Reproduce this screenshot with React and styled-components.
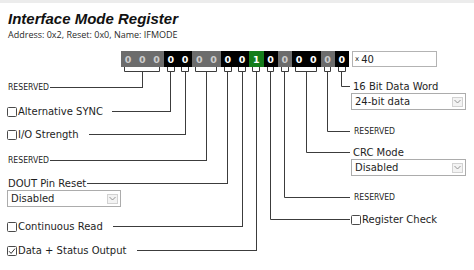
import React from "react";
import styled, { createGlobalStyle } from "styled-components";

const X0 = 121; // left edge of bit 15
const BIT_W = 14.25;
const LEFT_X = 7;
const RIGHT_X = 350;
const LINE = "#3c3c3c";

// register fields, bit 15 first
const groups = [
  { n: 3, kind: "reserved", value: "000", side: "left", y: 87.5 },
  { n: 1, kind: "field", value: "0", side: "left", y: 111.5 },
  { n: 1, kind: "field", value: "0", side: "left", y: 134.5 },
  { n: 2, kind: "reserved", value: "00", side: "left", y: 160.5 },
  { n: 1, kind: "field", value: "0", side: "left", y: 183.5 },
  { n: 1, kind: "field", value: "0", side: "left", y: 226.5 },
  { n: 1, kind: "field", value: "1", side: "left", y: 250.5 },
  { n: 1, kind: "field", value: "0", side: "right", y: 219.5 },
  { n: 1, kind: "reserved", value: "0", side: "right", y: 197.5 },
  { n: 2, kind: "field", value: "00", side: "right", y: 152.5 },
  { n: 1, kind: "reserved", value: "0", side: "right", y: 131.5 },
  { n: 1, kind: "field", value: "0", side: "right", y: 86.5 },
];

let start = 0;
const geo = groups.map((g) => {
  const L = X0 + start * BIT_W;
  const R = X0 + (start + g.n) * BIT_W;
  start += g.n;
  return {
    ...g,
    t1: Math.floor(L + 3.5) + 0.5,
    t2: Math.floor(R - 4) + 0.5,
    cx: Math.floor((L + R) / 2) + 0.5,
  };
});

const reach = (i) => geo[i].cx + 0.5 - LEFT_X;

const GlobalStyle = createGlobalStyle`
  html, body {
    margin: 0;
    padding: 0;
    background: #fff;
  }
  body {
    font-family: "DejaVu Sans", Verdana, sans-serif;
    font-size: 10px;
    color: #1e1e1e;
  }
`;

const Page = styled.div`
  position: relative;
  width: 474px;
  height: 270px;
  overflow: hidden;
  border-top: 3px solid #ececec;
  box-sizing: border-box;
`;

const Header = styled.header`
  padding: 7px 0 0 8px;
`;

const Title = styled.h1`
  margin: 0;
  font-family: "Liberation Sans", Arial, sans-serif;
  font-size: 15px;
  line-height: 17px;
  font-weight: bold;
  font-style: italic;
  color: #111;
`;

const Sub = styled.div`
  margin-top: 2px;
  font-family: "Open Sans", "Noto Sans", sans-serif;
  font-size: 9px;
  line-height: 12px;
  color: #2a2a2a;
`;

const BitRow = styled.div`
  display: flex;
  align-items: center;
  margin-top: 10px;
  padding-left: ${X0}px;
  height: 16px;
`;

const Bits = styled.div`
  display: flex;
  width: ${BIT_W * 16}px;
  height: 16px;
`;

const Bit = styled.div`
  flex: 1;
  display: flex;
  align-items: center;
  justify-content: center;
  font-weight: bold;
  font-size: 9.5px;
  background: ${({ $kind, $on }) =>
    $on ? "#147c1b" : $kind === "reserved" ? "#6c6c6c" : "#000"};
  color: ${({ $kind, $on }) =>
    !$on && $kind === "reserved" ? "#cdcdcd" : "#fff"};
`;

const HexInput = styled.div`
  margin-left: 3px;
  width: 85px;
  height: 16px;
  box-sizing: border-box;
  border: 1px solid #b3b3b3;
  display: flex;
  align-items: center;
  padding-left: 2px;
  font-size: 10px;
  color: #222;
  span {
    font-size: 7px;
    margin-right: 2px;
  }
`;

const Body = styled.div`
  display: flex;
  padding-left: ${LEFT_X}px;
`;

const Column = styled.div`
  display: flex;
  flex-direction: column;
  align-items: flex-start;
  width: ${({ $w }) => $w}px;
`;

const Row = styled.div`
  display: flex;
  align-items: center;
  height: 13px;
  margin-top: ${({ $top }) => $top}px;
  width: ${({ $reach }) => ($reach ? `${$reach}px` : "auto")};
  white-space: nowrap;
`;

const Label = styled.span`
  font-size: 10px;
  line-height: 13px;
  margin-left: ${({ $indent }) => $indent || 0}px;
`;

const Reserved = styled.span`
  font-family: "DejaVu Sans Condensed", "DejaVu Sans", sans-serif;
  font-stretch: condensed;
  font-size: 8.6px;
  line-height: 13px;
  margin-left: ${({ $indent }) => $indent || 0}px;
`;

const Leader = styled.span`
  flex: 1;
  height: 0;
  border-top: 1px solid ${LINE};
  margin-left: ${({ $gap }) => $gap}px;
`;

const SelectBox = styled.div`
  display: flex;
  align-items: center;
  width: ${({ $w }) => $w}px;
  height: 17px;
  box-sizing: border-box;
  margin-top: ${({ $top }) => $top}px;
  border: 1px solid #acacac;
  background: #fff;
  padding-left: 3px;
  font-size: 10px;
`;

const SelectText = styled.span`
  flex: 1;
`;

const Arrow = styled.span`
  width: 11px;
  height: 10px;
  margin-right: 2px;
  box-sizing: border-box;
  border: 1px solid #d2d2d2;
  background: #f3f3f3;
  display: flex;
  align-items: center;
  justify-content: center;
`;

const Overlay = styled.svg`
  position: absolute;
  top: -3px;
  left: 0;
  pointer-events: none;
`;

const Box = styled.svg`
  flex: none;
  width: 10px;
  height: 10px;
`;

const Check = ({ checked }) => (
  <Box viewBox="0 0 10 10">
    <rect x="0.5" y="0.5" width="9" height="9" rx="1" fill="#fff" stroke="#4a4a4a" />
    {checked && <path d="M2 5.2 L4.1 7.4 L8 2.6" fill="none" stroke="#333" strokeWidth="1" />}
  </Box>
);

const Select = ({ value, w, top }) => (
  <SelectBox $w={w} $top={top}>
    <SelectText>{value}</SelectText>
    <Arrow>
      <svg width="7" height="5" viewBox="0 0 7 5">
        <path d="M0.5 1 L3.5 4 L6.5 1" fill="none" stroke="#8a8a8a" strokeWidth="0.9" />
      </svg>
    </Arrow>
  </SelectBox>
);

const Connectors = () => (
  <Overlay width="474" height="270" viewBox="0 0 474 270">
    {geo.map((g, i) => (
      <g key={i} fill="none" stroke={LINE} strokeWidth="1">
        <path d={`M${g.t1} 67 V71.5 H${g.t2} V67`} />
        <path
          d={
            g.side === "right"
              ? `M${g.cx} 71.5 V${g.y} H${RIGHT_X}`
              : `M${g.cx} 71.5 V${g.y}`
          }
        />
      </g>
    ))}
  </Overlay>
);

const bits = groups.flatMap((g) =>
  g.value.split("").map((v) => ({ v, kind: g.kind }))
);

export default function App() {
  return (
    <>
      <GlobalStyle />
      <Page>
        <Header>
          <Title>Interface Mode Register</Title>
          <Sub>Address: 0x2, Reset: 0x0, Name: IFMODE</Sub>
        </Header>

        <BitRow>
          <Bits>
            {bits.map((b, i) => (
              <Bit key={i} $kind={b.kind} $on={b.v === "1"}>
                {b.v}
              </Bit>
            ))}
          </Bits>
          <HexInput>
            <span>x</span>40
          </HexInput>
        </BitRow>

        <Body>
          <Column $w={344}>
            <Row $top={14} $reach={reach(0)}>
              <Reserved $indent={1}>RESERVED</Reserved>
              <Leader $gap={1} />
            </Row>
            <Row $top={11} $reach={reach(1)}>
              <Check />
              <Label $indent={1}>Alternative SYNC</Label>
              <Leader $gap={9} />
            </Row>
            <Row $top={10} $reach={reach(2)}>
              <Check />
              <Label $indent={1}>I/O Strength</Label>
              <Leader $gap={10} />
            </Row>
            <Row $top={13} $reach={reach(3)}>
              <Reserved $indent={1}>RESERVED</Reserved>
              <Leader $gap={1} />
            </Row>
            <Row $top={10} $reach={reach(4)}>
              <Label $indent={1}>DOUT Pin Reset</Label>
              <Leader $gap={1} />
            </Row>
            <Select value="Disabled" w={114} top={0} />
            <Row $top={13} $reach={reach(5)}>
              <Check />
              <Label $indent={1}>Continuous Read</Label>
              <Leader $gap={10} />
            </Row>
            <Row $top={11} $reach={reach(6)}>
              <Check checked />
              <Label $indent={1}>Data + Status Output</Label>
              <Leader $gap={11} />
            </Row>
          </Column>

          <Column $w={115}>
            <Row $top={13}>
              <Label $indent={2}>16 Bit Data Word</Label>
            </Row>
            <Select value="24-bit data" w={115} top={0} />
            <Row $top={15}>
              <Reserved $indent={3}>RESERVED</Reserved>
            </Row>
            <Row $top={8}>
              <Label $indent={2}>CRC Mode</Label>
            </Row>
            <Select value="Disabled" w={115} top={0} />
            <Row $top={15}>
              <Reserved $indent={3}>RESERVED</Reserved>
            </Row>
            <Row $top={9}>
              <Check />
              <Label $indent={1}>Register Check</Label>
            </Row>
          </Column>
        </Body>

        <Connectors />
      </Page>
    </>
  );
}
